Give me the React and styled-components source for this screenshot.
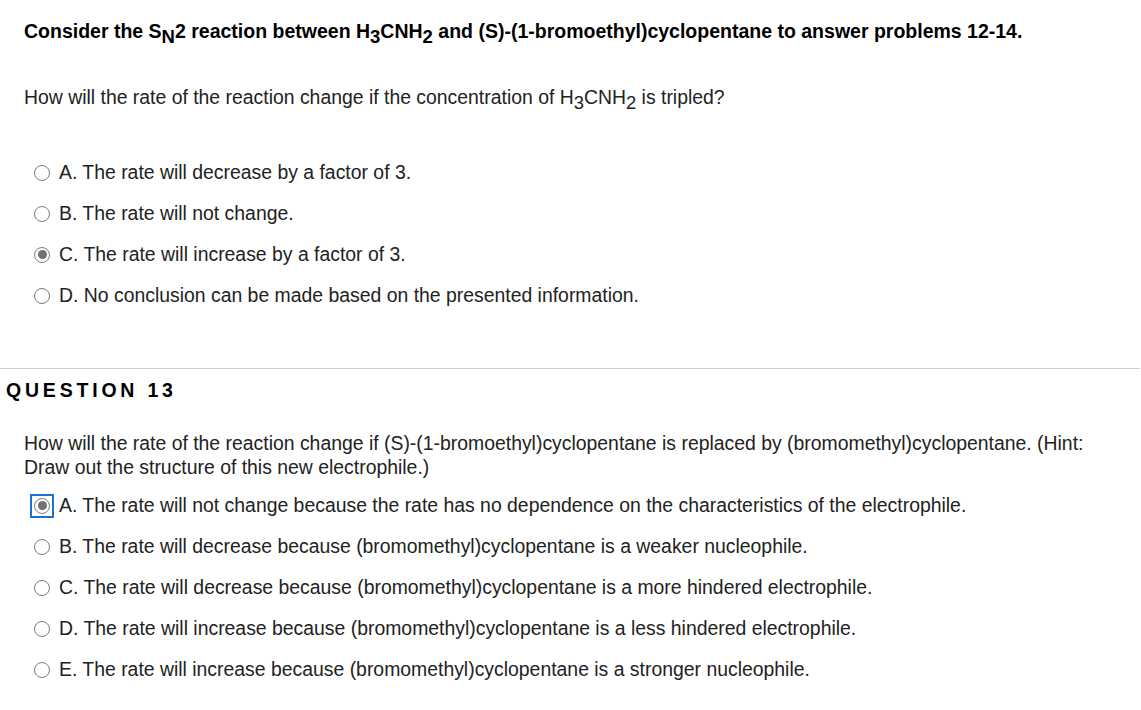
import React from 'react'
import styled, { createGlobalStyle } from 'styled-components'

const Global = createGlobalStyle`
  body {
    margin: 0;
    background: #fff;
    font-family: "Liberation Sans", Arial, sans-serif;
    color: #222;
  }
`

const Page = styled.div`
  width: 1141px;
  height: 710px;
  overflow: hidden;
`

const Block = styled.section`
  padding: ${p => p.top ?? 20}px 24px 0 24px;
`

const Heading = styled.h3`
  margin: 0;
  font-size: 19.5px;
  font-weight: 700;
  line-height: 22px;
  color: #000;
`

const Prompt = styled.p`
  margin: ${p => p.top || 0}px 0 0 0;
  font-size: 19.4px;
  line-height: 24px;
  color: #222;
`

const Sub = styled.sub`
  font-size: 0.95em;
  vertical-align: -0.28em;
  line-height: 0;
`

const Options = styled.div`
  margin-top: ${p => p.top}px;
  padding-left: 11px;
`

const Option = styled.label`
  display: flex;
  align-items: center;
  height: 41px;
  font-size: 19.4px;
  color: #222;
`

const RadioWrap = styled.span`
  display: inline-flex;
  align-items: center;
  justify-content: center;
  width: 24px;
  height: 24px;
  margin-left: -5px;
  box-sizing: border-box;
  border: ${p => (p.focus ? '2px solid #1874d2' : '2px solid transparent')};
`

const Radio = styled.span`
  width: 16px;
  height: 16px;
  box-sizing: border-box;
  border-radius: 50%;
  border: 1.5px solid #7c7c7c;
  background: #fff;
  display: flex;
  align-items: center;
  justify-content: center;
  &::after {
    content: '';
    display: ${p => (p.checked ? 'block' : 'none')};
    width: 9px;
    height: 9px;
    border-radius: 50%;
    background: #727272;
  }
`

const OptText = styled.span`
  margin-left: 5px;
`

const Gap = styled.div`
  height: ${p => p.h}px;
`

const Divider = styled.hr`
  margin: 0;
  border: 0;
  border-top: 1px solid #cfcfcf;
  width: 1140px;
`

const QLabel = styled.div`
  padding: 10px 0 0 6px;
  font-size: 19.5px;
  font-weight: 700;
  letter-spacing: 3.8px;
  color: #000;
`

const q12 = [
  { t: 'A. The rate will decrease by a factor of 3.' },
  { t: 'B. The rate will not change.' },
  { t: 'C. The rate will increase by a factor of 3.', checked: true },
  { t: 'D. No conclusion can be made based on the presented information.' },
]

const q13 = [
  { t: 'A. The rate will not change because the rate has no dependence on the characteristics of the electrophile.', checked: true, focus: true },
  { t: 'B. The rate will decrease because (bromomethyl)cyclopentane is a weaker nucleophile.' },
  { t: 'C. The rate will decrease because (bromomethyl)cyclopentane is a more hindered electrophile.' },
  { t: 'D. The rate will increase because (bromomethyl)cyclopentane is a less hindered electrophile.' },
  { t: 'E. The rate will increase because (bromomethyl)cyclopentane is a stronger nucleophile.' },
]

const OptionList = ({ items, top }) => (
  <Options top={top}>
    {items.map(o => (
      <Option key={o.t}>
        <RadioWrap focus={o.focus}>
          <Radio checked={o.checked} />
        </RadioWrap>
        <OptText>{o.t}</OptText>
      </Option>
    ))}
  </Options>
)

export default function App() {
  return (
    <Page>
      <Global />
      <Block>
        <Heading>
          Consider the S<Sub>N</Sub>2 reaction between H<Sub>3</Sub>CNH<Sub>2</Sub> and
          (S)-(1-bromoethyl)cyclopentane to answer problems 12-14.
        </Heading>
        <Prompt top={43}>
          How will the rate of the reaction change if the concentration of H<Sub>3</Sub>CNH
          <Sub>2</Sub> is tripled?
        </Prompt>
        <OptionList items={q12} top={43} />
      </Block>
      <Gap h={52} />
      <Divider />
      <QLabel>QUESTION 13</QLabel>
      <Block top={0}>
        <Prompt top={29}>
          How will the rate of the reaction change if (S)-(1-bromoethyl)cyclopentane is replaced by
          (bromomethyl)cyclopentane. (Hint: Draw out the structure of this new electrophile.)
        </Prompt>
        <OptionList items={q13} top={6} />
      </Block>
    </Page>
  )
}
